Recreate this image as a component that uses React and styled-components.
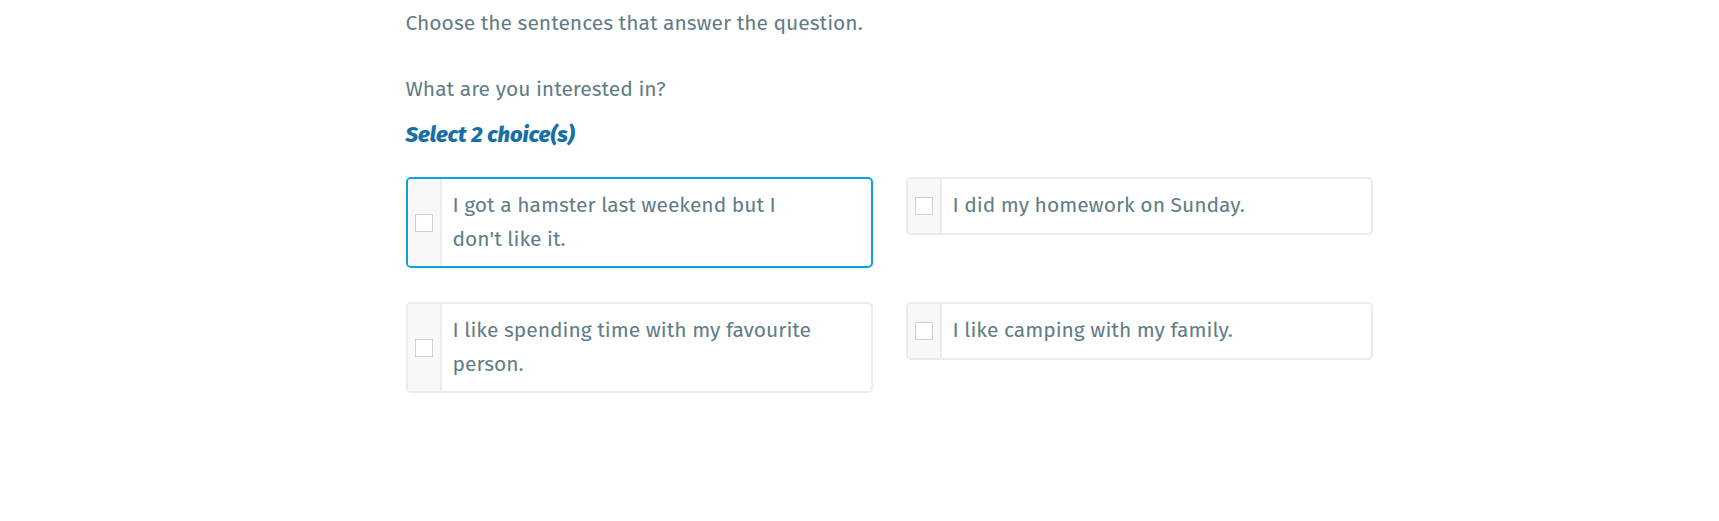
import React from 'react';
import styled, {createGlobalStyle} from 'styled-components';

const choices = [
  {id: 1, text: "I got a hamster last weekend but I don't like it.", active: true},
  {id: 2, text: 'I did my homework on Sunday.'},
  {id: 3, text: 'I like spending time with my favourite person.'},
  {id: 4, text: 'I like camping with my family.'},
];

const App = () => {
  return (
    <>
      <GlobalStyle />
      <Page>
        <Instruction>Choose the sentences that answer the question.</Instruction>
        <Question>What are you interested in?</Question>
        <Hint>Select 2 choice(s)</Hint>
        <ChoiceGrid>
          {choices.map((c) => (
            <Choice key={c.id} $active={c.active}>
              <CheckColumn>
                <CheckBox />
              </CheckColumn>
              <ChoiceText>{c.text}</ChoiceText>
            </Choice>
          ))}
        </ChoiceGrid>
      </Page>
    </>
  );
};

const GlobalStyle = createGlobalStyle`
  body {
    margin: 0;
    background: #ffffff;
    font-family: 'Fira Sans', Lato, 'Open Sans', sans-serif;
  }
`;

const Page = styled.div`
  max-width: 1030px;
  margin: 0 auto;
  padding: 8px 0 40px 61px;
  box-sizing: border-box;
  color: #607d87;
`;

const Instruction = styled.p`
  margin: 0;
  font-size: 21px;
  line-height: 30px;
`;

const Question = styled.p`
  margin: 36px 0 0;
  font-size: 21px;
  line-height: 30px;
`;

const Hint = styled.p`
  margin: 16px 0 0;
  font-size: 22px;
  line-height: 30px;
  font-weight: 800;
  font-style: italic;
  color: #1670a6;
`;

const ChoiceGrid = styled.div`
  display: grid;
  grid-template-columns: 467px 467px;
  column-gap: 33px;
  row-gap: 34px;
  align-items: start;
  margin-top: 27px;
  width: 967px;
`;

const Choice = styled.div`
  display: flex;
  box-sizing: border-box;
  border: 2px solid ${(p) => (p.$active ? '#0aa5d8' : '#ebebeb')};
  border-radius: 5px;
  background: #ffffff;
  overflow: hidden;
  cursor: pointer;
`;

const CheckColumn = styled.div`
  flex: 0 0 32px;
  display: flex;
  align-items: center;
  justify-content: center;
  background: #f8f8f8;
  border-right: 2px solid #ececec;
`;

const CheckBox = styled.span`
  width: 18px;
  height: 18px;
  box-sizing: border-box;
  border: 1px solid #cfcfcf;
  background: #ffffff;
`;

const ChoiceText = styled.div`
  flex: 1;
  padding: 10px 52px 10px 11px;
  font-size: 21px;
  line-height: 33.5px;
`;

export default App;
